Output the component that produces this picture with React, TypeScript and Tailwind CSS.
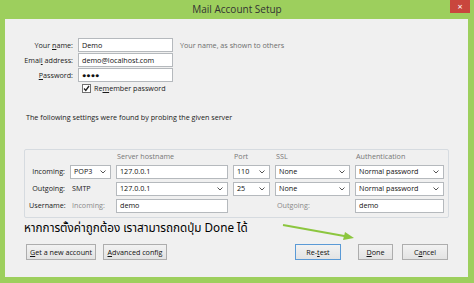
import React from "react";

const font = { fontFamily: '"Open Sans", "Noto Sans", sans-serif' };

function Chevron() {
  return (
    <svg width="6" height="4" viewBox="0 0 6 4" className="shrink-0">
      <path d="M0.5 0.5 L3 3 L5.5 0.5" fill="none" stroke="#555" strokeWidth="1" />
    </svg>
  );
}

function Field({ value, w, dropdown }: { value: string; w: string; dropdown?: boolean }) {
  return (
    <div className={`${w} h-[14px] bg-white border border-[#b5b9bd] flex items-center justify-between pl-[3px] pr-[4px] text-[7.2px] text-[#111]`}>
      <span>{value}</span>
      {dropdown && <Chevron />}
    </div>
  );
}

function Btn({ children, w, focused }: { children: React.ReactNode; w: string; focused?: boolean }) {
  return (
    <div
      className={`${w} h-[16px] flex items-center justify-center text-[7.2px] text-[#111] bg-gradient-to-b from-[#f2f2f2] to-[#e3e3e3] border ${
        focused ? "border-[#5a9ad6]" : "border-[#adadad]"
      }`}
    >
      {children}
    </div>
  );
}

export default function App() {
  return (
    <div className="w-[474px] h-[283px] bg-[#9dcf5d] flex flex-col" style={font}>
      {/* title bar */}
      <div className="h-[19px] grid grid-cols-[1fr_auto_1fr]">
        <div />
        <div className="text-[10px] leading-[19px] text-[#333]">Mail Account Setup</div>
        <div className="flex justify-end pr-[4px]">
          <div className="w-[20px] h-[13px] bg-[#c9463d] flex items-center justify-center text-white text-[9px] leading-none">
            ×
          </div>
        </div>
      </div>

      {/* content */}
      <div className="ml-[5px] mr-[6px] h-[258px] bg-[#f0f0f0] relative text-[7.2px] text-[#1a1a1a]">
        <div className="pt-[19px] flex flex-col gap-[1px]">
          <div className="flex items-center h-[14px]">
            <div className="w-[68px] text-right">
              Your <u>n</u>ame:
            </div>
            <div className="ml-[5px]">
              <Field value="Demo" w="w-[95px]" />
            </div>
            <div className="ml-[7px] text-[#6d6d6d]">Your name, as shown to others</div>
          </div>
          <div className="flex items-center h-[14px]">
            <div className="w-[68px] text-right">
              Emai<u>l</u> address:
            </div>
            <div className="ml-[5px]">
              <Field value="demo@localhost.com" w="w-[95px]" />
            </div>
          </div>
          <div className="flex items-center h-[14px]">
            <div className="w-[68px] text-right">
              <u>P</u>assword:
            </div>
            <div className="ml-[5px]">
              <Field value="●●●●" w="w-[95px]" />
            </div>
          </div>
        </div>

        <div className="mt-[2px] ml-[77px] flex items-center h-[9px] gap-[3px]">
          <div className="w-[9px] h-[9px] border border-[#707070] bg-white flex items-center justify-center">
            <svg width="7" height="7" viewBox="0 0 7 7">
              <path d="M1 3.5 L2.8 5.5 L6 1" fill="none" stroke="#222" strokeWidth="1.3" />
            </svg>
          </div>
          <span>
            Re<u>m</u>ember password
          </span>
        </div>

        <div className="mt-[18px] ml-[21px] h-[12px] leading-[12px]">
          The following settings were found by probing the given server
        </div>

        {/* settings group */}
        <div className="mt-[26px] ml-[19px] w-[425px] h-[69px] border border-[#d6dbe0] rounded-[2px] pl-[4px] pt-[1px]">
          <div className="grid grid-cols-[36px_41px_112px_37px_75px_89px] gap-x-[5px] grid-rows-[11px_15px_15px_15px] gap-y-[2px] items-center">
            <div />
            <div />
            <div className="pl-[1px] text-[#777]">Server hostname</div>
            <div className="pl-[1px] text-[#777]">Port</div>
            <div className="pl-[1px] text-[#777]">SSL</div>
            <div className="pl-[1px] text-[#777]">Authentication</div>

            <div className="text-right">Incoming:</div>
            <Field value="POP3" w="w-[41px]" dropdown />
            <Field value="127.0.0.1" w="w-[112px]" />
            <Field value="110" w="w-[37px]" dropdown />
            <Field value="None" w="w-[75px]" dropdown />
            <Field value="Normal password" w="w-[89px]" dropdown />

            <div className="text-right">Outgoing:</div>
            <div className="pl-[2px]">SMTP</div>
            <Field value="127.0.0.1" w="w-[112px]" dropdown />
            <Field value="25" w="w-[37px]" dropdown />
            <Field value="None" w="w-[75px]" dropdown />
            <Field value="Normal password" w="w-[89px]" dropdown />

            <div className="text-right">Username:</div>
            <div className="pl-[2px] text-[#8a8a8a]">Incoming:</div>
            <Field value="demo" w="w-[112px]" />
            <div />
            <div className="pl-[2px] text-[#8a8a8a]">Outgoing:</div>
            <Field value="demo" w="w-[89px]" />
          </div>
        </div>

        <div
          className="mt-[2px] ml-[19px] h-[18px] leading-[18px] text-[11.7px] text-black"
          style={{ fontFamily: '"Noto Sans Thai", "Noto Sans", "DejaVu Sans", sans-serif' }}
        >
          หากการตั้งค่าถูกต้อง เราสามารถกดปุ่ม Done ได้
        </div>

        {/* buttons */}
        <div className="mt-[6px] flex items-center pl-[21px] pr-[20px]">
          <Btn w="w-[70px]">
            <u>G</u>et a new account
          </Btn>
          <div className="ml-[7px]">
            <Btn w="w-[64px]">
              <u>A</u>dvanced config
            </Btn>
          </div>
          <div className="flex-1" />
          <Btn w="w-[46px]" focused>
            Re-<u>t</u>est
          </Btn>
          <div className="ml-[17px]">
            <Btn w="w-[35px]">
              <u>D</u>one
            </Btn>
          </div>
          <div className="ml-[9px]">
            <Btn w="w-[46px]">
              C<u>a</u>ncel
            </Btn>
          </div>
        </div>

        {/* annotation arrow */}
        <svg className="absolute left-[276px] top-[204px]" width="80" height="18" viewBox="0 0 80 18">
          <path d="M2 2 L66 13.5" stroke="#8cc63f" strokeWidth="2" fill="none" />
          <path d="M73 15 L62 17 L64 9 Z" fill="#8cc63f" />
        </svg>
      </div>
    </div>
  );
}
